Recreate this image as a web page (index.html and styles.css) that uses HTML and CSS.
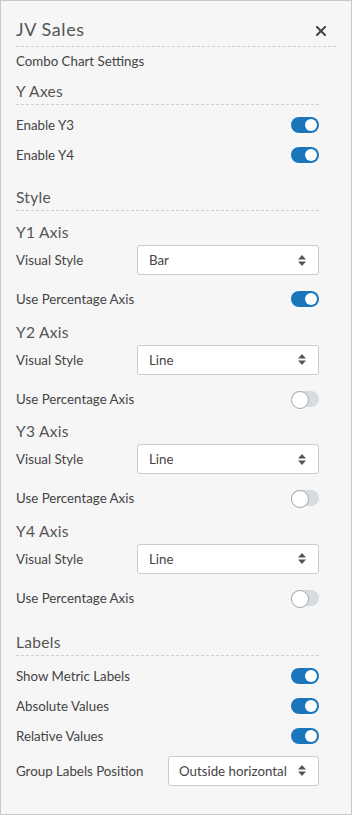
FILE: index.html
```html
<!DOCTYPE html>
<html lang="en">
<head>
<meta charset="utf-8">
<title>JV Sales</title>
<link rel="stylesheet" href="styles.css">
</head>
<body>
<div class="panel">
  <div class="header">
    <div class="title">JV Sales</div>
    <svg class="close" width="10" height="10" viewBox="0 0 10 10"><path d="M1 1L9 9M9 1L1 9" stroke="#444" stroke-width="2" stroke-linecap="square"/></svg>
  </div>
  <div class="subtitle">Combo Chart Settings</div>

  <div class="section first">
    <div class="heading">Y Axes</div>
    <div class="rows">
      <div class="row"><span>Enable Y3</span><span class="toggle on"></span></div>
      <div class="row"><span>Enable Y4</span><span class="toggle on"></span></div>
    </div>
  </div>

  <div class="section">
    <div class="heading">Style</div>
    <div class="axis">
      <div class="subheading">Y1 Axis</div>
      <div class="row select-row"><span>Visual Style</span><div class="select wide"><span>Bar</span><svg class="arrows" width="8" height="11" viewBox="0 0 8 11"><path d="M0 4.5L4 0L8 4.5Z M0 6.5L4 11L8 6.5Z" fill="#555"/></svg></div></div>
      <div class="row pct"><span>Use Percentage Axis</span><span class="toggle on"></span></div>
    </div>
    <div class="axis">
      <div class="subheading">Y2 Axis</div>
      <div class="row select-row"><span>Visual Style</span><div class="select wide"><span>Line</span><svg class="arrows" width="8" height="11" viewBox="0 0 8 11"><path d="M0 4.5L4 0L8 4.5Z M0 6.5L4 11L8 6.5Z" fill="#555"/></svg></div></div>
      <div class="row pct"><span>Use Percentage Axis</span><span class="toggle"></span></div>
    </div>
    <div class="axis">
      <div class="subheading">Y3 Axis</div>
      <div class="row select-row"><span>Visual Style</span><div class="select wide"><span>Line</span><svg class="arrows" width="8" height="11" viewBox="0 0 8 11"><path d="M0 4.5L4 0L8 4.5Z M0 6.5L4 11L8 6.5Z" fill="#555"/></svg></div></div>
      <div class="row pct"><span>Use Percentage Axis</span><span class="toggle"></span></div>
    </div>
    <div class="axis">
      <div class="subheading">Y4 Axis</div>
      <div class="row select-row"><span>Visual Style</span><div class="select wide"><span>Line</span><svg class="arrows" width="8" height="11" viewBox="0 0 8 11"><path d="M0 4.5L4 0L8 4.5Z M0 6.5L4 11L8 6.5Z" fill="#555"/></svg></div></div>
      <div class="row pct"><span>Use Percentage Axis</span><span class="toggle"></span></div>
    </div>
  </div>

  <div class="section labels">
    <div class="heading">Labels</div>
    <div class="rows">
      <div class="row"><span>Show Metric Labels</span><span class="toggle on"></span></div>
      <div class="row"><span>Absolute Values</span><span class="toggle on"></span></div>
      <div class="row"><span>Relative Values</span><span class="toggle on"></span></div>
      <div class="row select-row group"><span>Group Labels Position</span><div class="select narrow"><span>Outside horizontal</span><svg class="arrows" width="8" height="11" viewBox="0 0 8 11"><path d="M0 4.5L4 0L8 4.5Z M0 6.5L4 11L8 6.5Z" fill="#555"/></svg></div></div>
    </div>
  </div>
</div>
</body>
</html>
```

FILE: styles.css
```css
* { box-sizing: border-box; }
html, body { margin: 0; padding: 0; }
body {
  font-family: Lato, "Open Sans", sans-serif;
  color: #444;
  background: #f6f6f6;
}
.panel {
  width: 352px;
  height: 815px;
  border: 1px solid #c8c8c8;
  background: #f6f6f6;
  padding: 15px 15px 0 15px;
}
.header {
  display: flex;
  justify-content: space-between;
  align-items: center;
  padding-bottom: 4px;
  border-bottom: 1px dashed #cfcfcf;
}
.title {
  font-size: 18px;
  line-height: 26px;
  letter-spacing: 0.6px;
  color: #555;
}
.close { margin-right: 10px; margin-top: 3px; }
.subtitle {
  margin-top: 4px;
  font-size: 13.3px;
  line-height: 20px;
}
.section {
  margin-right: 17px;
  margin-top: 17px;
}
.section.first { margin-top: 10px; }
.section.labels { margin-top: 19px; }
.heading {
  font-size: 15.5px;
  line-height: 20px;
  letter-spacing: 0.3px;
  color: #555;
  padding-bottom: 3px;
  border-bottom: 1px dashed #cfcfcf;
}
.rows { margin-top: 5px; }
.row {
  display: flex;
  justify-content: space-between;
  align-items: center;
  height: 30px;
  font-size: 13.3px;
}
.axis { margin-top: 5.5px; }
.heading + .axis { margin-top: 9px; }
.subheading {
  font-size: 15.5px;
  line-height: 24px;
  letter-spacing: 0.3px;
  color: #555;
}
.select-row { margin-top: 1px; }
.pct { margin-top: 9px; }
.group { margin-top: 5px; }
.select {
  height: 30px;
  background: #fff;
  border: 1px solid #cccccc;
  border-radius: 3px;
  display: flex;
  align-items: center;
  justify-content: space-between;
  padding: 0 12px 0 11px;
  font-size: 13.3px;
  color: #444;
}
.select.wide { width: 182px; }
.select.narrow { width: 151px; padding-left: 10px; }
.arrows { display: block; }
.toggle {
  position: relative;
  width: 28px;
  height: 16px;
  border-radius: 8px;
  background: #d6dce2;
}
.toggle::after {
  content: "";
  position: absolute;
  left: 0;
  top: 0;
  width: 16px;
  height: 16px;
  border-radius: 50%;
  background: #fff;
  border: 1px solid #a8a8a8;
}
.toggle.on { background: #1b75bb; }
.toggle.on::after {
  left: auto;
  right: 2px;
  top: 2px;
  width: 12px;
  height: 12px;
  border: none;
}
```
